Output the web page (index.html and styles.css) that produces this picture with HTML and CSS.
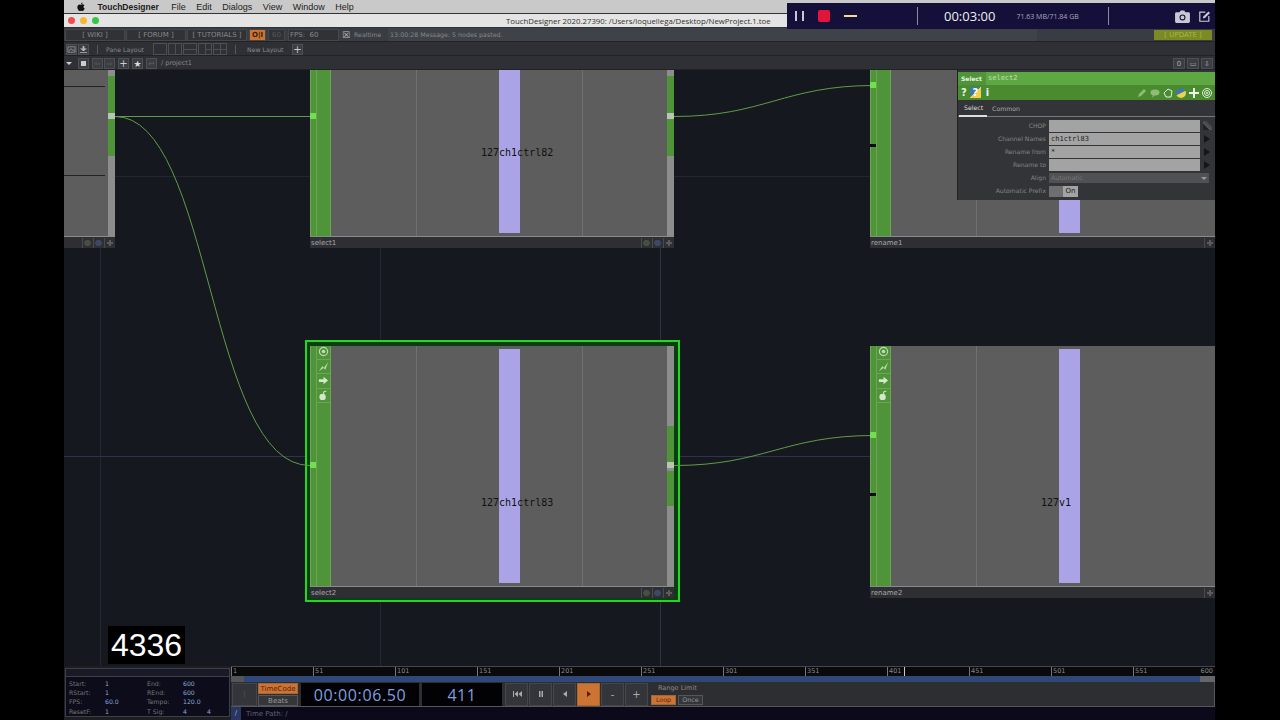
FILE: index.html
```html
<!DOCTYPE html>
<html lang="en">

<head>
  <meta charset="UTF-8" />
  <title>TouchDesigner</title>
  <link rel="stylesheet" href="styles.css">
</head>

<body>
  <div class="app">
    <div class="menubar">
      <svg class="apple" viewBox="0 0 12 14"><path d="M8.3 0.4c0 1.3-1 2.5-2.3 2.5C5.9 1.6 7 .5 8.3.4zM6 3.6c.6 0 1.400-.6 2.500-.6 1 0 2 .5 2.600 1.400-2 1.200-1.700 4 .4 4.900-.5 1.400-1.700 3.700-3 3.700-.8 0-1.200-.5-2.200-.5s-1.400.5-2.200.5C2.400 13 .5 9.900.5 7.300.5 4.700 2.200 3.100 3.900 3.100c.9 0 1.600.5 2.100.5z"/></svg>
      <b>TouchDesigner</b>
      <span>File</span><span>Edit</span><span>Dialogs</span><span>View</span><span>Window</span><span>Help</span>
    </div>

    <div class="titlebar">
      <i class="light red"></i><i class="light yellow"></i><i class="light green"></i>
      <span class="title">TouchDesigner 2020.27390: /Users/loquellega/Desktop/NewProject.1.toe</span>
    </div>

    <div class="bar toolbar1">
      <span class="tbtn w60">[ WIKI ]</span>
      <span class="tbtn w60">[ FORUM ]</span>
      <span class="tbtn w60">[ TUTORIALS ]</span>
      <span class="tbtn oi">O|I</span>
      <span class="tbtn sixty">60</span>
      <span class="tbtn fps">FPS:&nbsp; 60</span>
      <span class="check">&#9746;</span>
      <span class="realtime">Realtime</span>
      <span class="message">13:00:28 Message: 5 nodes pasted.</span>
      <span class="update">[ UPDATE ]</span>
    </div>

    <div class="bar toolbar2">
      <span class="sq"><svg viewBox="0 0 10 10"><path d="M1 2h8v6H1zM2 7l2.500-3L6 6l1-1 1.500 2" fill="none" stroke="#a0a3a8" stroke-width=".8"/></svg></span>
      <span class="sq"><svg viewBox="0 0 10 10"><path d="M4 1h2v3h3L5 7 1 4h3zM1 8h8v1H1z" fill="#b5b8bd"/></svg></span>
      <i class="sep"></i>
      <span class="label pane">Pane Layout</span>
      <span class="layouts"><i></i><i class="split-v"></i><i class="split-h"></i><i class="split-3"></i><i class="split-4"></i></span>
      <i class="sep"></i>
      <span class="label newlayout">New Layout</span>
      <span class="sq plus">+</span>
    </div>

    <div class="bar toolbar3">
      <span class="arrow-down"></span>
      <span class="sq stop"><i></i></span>
      <span class="sq dim nudge">&#8678;</span>
      <span class="sq dim">&#8680;</span>
      <span class="sq plus nudge">+</span>
      <span class="sq star nudge">&#9733;</span>
      <span class="sq dim nudge">&#8617;</span>
      <span class="path">/ project1</span>
      <span class="corner">
        <span class="sq">0</span><span class="sq">&#9645;</span><span class="sq">&#8681;</span>
      </span>
    </div>

    <div class="network">
      <i class="guide gv g1"></i><i class="guide gv g2"></i><i class="guide gv g3"></i>
      <i class="guide gh"></i><i class="guide gh2"></i>

      <div class="node left-node">
        <div class="node-body">
          <i class="tick t1"></i><i class="tick t2"></i>
        </div>
        <div class="out-strip"><i class="st1"></i><i class="st2"></i></div>
        <div class="footer"><span class="name"></span><i class="dot"></i><i class="dot blue"></i><i class="dot cross"></i></div>
      </div>

      <div class="node n-select1">
        <div class="in-strip"></div>
        <div class="node-body">
          <i class="vline l1"></i><i class="vline l2"></i><i class="lane"></i>
          <span class="chan">127ch1ctrl82</span>
        </div>
        <div class="out-strip"><i class="st3"></i></div>
        <div class="footer"><span class="name">select1</span><i class="dot"></i><i class="dot blue"></i><i class="dot cross"></i></div>
      </div>

      <div class="node n-rename1">
        <div class="in-strip"></div>
        <div class="node-body">
          <i class="vline l1"></i><i class="lane"></i>
        </div>
        <div class="footer"><span class="name">rename1</span><i class="dot cross"></i></div>
        <i class="black-pin"></i>
      </div>

      <div class="selected"></div>
      <div class="node n-select2">
        <div class="in-strip">
          <div class="flags">
            <span><svg viewBox="0 0 12 12"><circle cx="6" cy="6" r="4.500" fill="none" stroke="#c3dab6" stroke-width="1.200"/><circle cx="6" cy="6" r="2" fill="#c3dab6"/></svg></span>
            <span><svg viewBox="0 0 12 12"><path d="M1 11 5 5.500 6.500 7.500 11 1 8 9.500 6.200 7.500z" fill="#c3dab6"/></svg></span>
            <span><svg viewBox="0 0 12 12"><path d="M1 4.500h5V2l5 4-5 4V7.500H1z" fill="#d6e6cc"/></svg></span>
            <span><svg viewBox="0 0 12 12"><circle cx="5" cy="7.500" r="3.500" fill="#d6e6cc"/><path d="M6 4c0-2 1-3 3-2.500" fill="none" stroke="#d6e6cc" stroke-width="1.200"/></svg></span>
          </div>
        </div>
        <div class="node-body">
          <i class="vline l1"></i><i class="vline l2"></i><i class="lane"></i>
          <span class="chan">127ch1ctrl83</span>
        </div>
        <div class="out-strip"><i class="st4"></i><i class="st5"></i></div>
        <div class="footer"><span class="name">select2</span><i class="dot"></i><i class="dot blue"></i><i class="dot cross"></i></div>
      </div>

      <div class="node n-rename2">
        <div class="in-strip">
          <div class="flags">
            <span><svg viewBox="0 0 12 12"><circle cx="6" cy="6" r="4.500" fill="none" stroke="#c3dab6" stroke-width="1.200"/><circle cx="6" cy="6" r="2" fill="#c3dab6"/></svg></span>
            <span><svg viewBox="0 0 12 12"><path d="M1 11 5 5.500 6.500 7.500 11 1 8 9.500 6.200 7.500z" fill="#c3dab6"/></svg></span>
            <span><svg viewBox="0 0 12 12"><path d="M1 4.500h5V2l5 4-5 4V7.500H1z" fill="#d6e6cc"/></svg></span>
            <span><svg viewBox="0 0 12 12"><circle cx="5" cy="7.500" r="3.500" fill="#d6e6cc"/><path d="M6 4c0-2 1-3 3-2.500" fill="none" stroke="#d6e6cc" stroke-width="1.200"/></svg></span>
          </div>
        </div>
        <div class="node-body">
          <i class="vline l1"></i><i class="lane"></i>
          <span class="chan">127v1</span>
        </div>
        <div class="footer"><span class="name">rename2</span><i class="dot cross"></i></div>
        <i class="black-pin"></i>
      </div>

      <svg class="wires" viewBox="0 0 1151 596">
        <g fill="none" stroke="#5f9c47" stroke-width="1">
          <path d="M51 46.500H250"/>
          <path d="M51 46.500C148 46.500 144 395.500 246 395.500"/>
          <path d="M610 46.500C700 46.500 720 15.500 810 15.500"/>
          <path d="M610 395.500C700 395.500 720 365.500 810 365.500"/>
        </g>
        <g fill="#b9c4b4">
          <rect x="44" y="43" width="7" height="6"/>
          <rect x="603" y="43" width="7" height="6"/>
          <rect x="603" y="392" width="7" height="6"/>
        </g>
        <g fill="#6fe04f">
          <rect x="246" y="43" width="6" height="6"/>
          <rect x="246" y="392" width="6" height="6"/>
          <rect x="806" y="12" width="6" height="6"/>
          <rect x="806" y="362" width="6" height="6"/>
        </g>
      </svg>

      <div class="counter">4336</div>

      <div class="params">
        <div class="p-head">
          <b>Select</b><span class="p-name">select2</span>
        </div>
        <div class="p-icons">
          <span class="q">?</span>
          <span class="qpy">?</span>
          <span class="info">i</span>
          <span class="p-right">
            <svg viewBox="0 0 10 10"><path d="M1 9 2 6 7 1 9 3 4 8z" fill="#8fbd77"/></svg>
            <svg viewBox="0 0 10 10"><ellipse cx="5" cy="4.500" rx="4.500" ry="3" fill="#8fbd77"/><path d="M3 7 2 9.500 5 7.500z" fill="#8fbd77"/></svg>
            <svg viewBox="0 0 10 10"><path d="M1 5 5 1 9 3 8 9H3z" fill="none" stroke="#e6efe0"/></svg>
            <svg viewBox="0 0 10 10"><path d="M5 0a5 5 0 0 0-5 5c0 .8.200 1.500.5 2.200L9.500 2.800A5 5 0 0 0 5 0z" fill="#3f78ab"/><path d="M5 10a5 5 0 0 0 5-5c0-.8-.2-1.500-.5-2.200L.5 7.200A5 5 0 0 0 5 10z" fill="#f2d04f"/></svg>
            <svg viewBox="0 0 10 10"><path d="M4 0h2v4h4v2H6v4H4V6H0V4h4z" fill="#eef5ea"/></svg>
            <svg viewBox="0 0 10 10"><g fill="none" stroke="#dfeeda"><circle cx="5" cy="5" r="4.500"/><circle cx="5" cy="5" r="2.500"/></g><circle cx="5" cy="5" r="1" fill="#dfeeda"/></svg>
          </span>
        </div>
        <div class="p-tabs"><span class="on">Select</span><span>Common</span></div>
        <div class="p-rows">
          <div class="p-row"><label>CHOP</label><span class="field"></span><span class="drop"></span></div>
          <div class="p-row"><label>Channel Names</label><span class="field">ch1ctrl83</span><span class="tri"></span></div>
          <div class="p-row"><label>Rename from</label><span class="field">*</span><span class="tri"></span></div>
          <div class="p-row"><label>Rename to</label><span class="field"></span><span class="tri"></span></div>
          <div class="p-row"><label>Align</label><span class="menu">Automatic</span></div>
          <div class="p-row"><label>Automatic Prefix</label><span class="toggle"><i></i><b>On</b></span></div>
        </div>
      </div>
    </div>

    <div class="timeline">
      <div class="range-panel">
        <div class="range-head"></div>
        <div class="range-grid">
          <span>Start:</span><em>1</em><span>End:</span><em>600</em><em></em>
          <span>RStart:</span><em>1</em><span>REnd:</span><em>600</em><em></em>
          <span>FPS:</span><em>60.0</em><span>Tempo:</span><em>120.0</em><em></em>
          <span>ResetF:</span><em>1</em><span>T Sig:</span><em>4</em><em>4</em>
        </div>
      </div>
      <div class="time-main">
        <div class="ruler">
          <span>1</span><span>51</span><span>101</span><span>151</span><span>201</span><span>251</span><span>301</span><span>351</span><span>401</span><span>451</span><span>501</span><span>551<b>600</b></span>
          <i class="playhead"></i>
        </div>
        <div class="range-bar"></div>
        <div class="transport">
          <span class="tp-btn first">|</span>
          <div class="modes"><span class="mode on">TimeCode</span><span class="mode">Beats</span></div>
          <span class="readout code">00:00:06.50</span>
          <span class="readout frame">411</span>
          <span class="tp-btn"><svg viewBox="0 0 10 6"><path d="M1 0h1v6H1zM6 0v6L2.500 3zM10 0v6L6.500 3z" fill="#aaa"/></svg></span>
          <span class="tp-btn"><svg viewBox="0 0 10 6"><path d="M3 0h1.500v6H3zM5.500 0H7v6H5.500z" fill="#aaa"/></svg></span>
          <span class="tp-btn"><svg viewBox="0 0 10 6"><path d="M7 0v6L3 3z" fill="#aaa"/></svg></span>
          <span class="tp-btn active"><svg viewBox="0 0 10 6"><path d="M3 0v6l4-3z" fill="#5c1a08"/></svg></span>
          <span class="tp-btn big">-</span>
          <span class="tp-btn big">+</span>
          <div class="limit">
            <span class="limit-title">Range Limit</span>
            <div class="limit-btns"><span class="mode on">Loop</span><span class="mode">Once</span></div>
          </div>
        </div>
        <div class="timepath"><span class="slash">/</span><span>Time Path: /</span></div>
      </div>
    </div>
  </div>

  <div class="recorder">
    <div class="rec-controls">
      <i class="pause"></i><i class="pause p2"></i>
      <i class="rec-dot"></i>
      <i class="minus"></i>
    </div>
    <div class="rec-info">
      <span class="rec-time">00:03:00</span>
      <span class="rec-size">71.63 MB/71.84 GB</span>
    </div>
    <div class="rec-tools">
      <svg class="cam" viewBox="0 0 16 14"><path d="M1.500 2.500H5L6 .5h4l1 2h3.500A1.500 1.500 0 0 1 16 4v8.500a1.500 1.500 0 0 1-1.500 1.500h-13A1.500 1.500 0 0 1 0 12.500V4a1.500 1.500 0 0 1 1.500-1.500z" fill="#c9c9d6"/><circle cx="8" cy="8" r="3.200" fill="#14103a"/><circle cx="8" cy="8" r="2" fill="#c9c9d6"/></svg>
      <svg class="edit" viewBox="0 0 14 14"><path d="M8 1.500H1V13h11.500V6.500" fill="none" stroke="#c9c9d6" stroke-width="1.500"/><path d="M5 9.500 5.500 7 12 .5 14 2.500 7.500 9z" fill="#c9c9d6"/></svg>
    </div>
  </div>
</body>

</html>
```

FILE: styles.css
```css
:root {
  --bar: #2e3035;
  --line: #4a4d52;
  --text-dim: #85888e;
  --green: #4f9438;
  --node: #5d5d5d;
  --lane: #aaa4e6;
  --orange: #cc7434;
  --blue-text: #7f9fe0;
}

* {
  box-sizing: border-box;
}

html,
body {
  margin: 0;
  height: 100%;
  background: #000;
  overflow: hidden;
}

body {
  font-family: "DejaVu Sans", sans-serif;
  font-size: 7px;
  color: var(--text-dim);
}

i {
  display: block;
}

.app {
  width: 1151px;
  height: 720px;
  margin-left: 64px;
  display: flex;
  flex-direction: column;
  background: #202226;
}

/* mac chrome */
.menubar {
  height: 13px;
  background: #c9c9c9;
  display: flex;
  align-items: center;
  gap: 10.500px;
  padding-left: 13px;
  color: #1c1c1c;
  font-family: "Liberation Sans", sans-serif;
  font-size: 9px;
}

.menubar b {
  margin: 0 2px 0 2px;
  font-size: 8.500px;
}

.apple {
  width: 8px;
  height: 10px;
  fill: #111;
}

.titlebar {
  height: 15px;
  background: #e4e4e4;
  border-top: 1px solid #333;
  border-bottom: 1px solid #333;
  display: flex;
  align-items: center;
  gap: 5px;
  padding-left: 4px;
  position: relative;
}

.light {
  width: 7px;
  height: 7px;
  border-radius: 50%;
}

.red { background: #f0504a; }
.yellow { background: #f5b731; }
.green { background: #35c748; }

.title {
  position: absolute;
  left: 442px;
  font-family: "Open Sans", sans-serif;
  font-size: 7.800px;
  color: #333;
  white-space: nowrap;
}

/* toolbars */
.bar {
  display: flex;
  align-items: center;
  background: var(--bar);
  border-bottom: 1px solid #222;
  white-space: nowrap;
}

.toolbar1 {
  height: 14px;
  padding-left: 1px;
  gap: 1px;
  background: #393c42;
}

.tbtn {
  height: 12px;
  text-align: center;
  background: #303236;
  border: 1px solid #44474c;
  line-height: 10px;
}

.w60 { width: 60px; }
.oi { width: 17px; margin-left: 1px; background: var(--orange); color: #3b1d08; font-weight: bold; }
.sixty { width: 17px; margin-left: 1px; color: #555; }
.fps { width: 51px; margin-left: 2px; text-align: left; padding-left: 1px; }

.check {
  margin-left: 2px;
  font-size: 9px;
  color: #bbb;
}

.realtime {
  margin-left: 3px;
  width: 33px;
  font-size: 6.200px;
}

.message {
  background: #3f4248;
  height: 13px;
  line-height: 13px;
  width: 649px;
  padding-left: 2px;
  font-size: 6.300px;
}

.update {
  width: 58px;
  height: 10px;
  line-height: 10px;
  margin-left: 116px;
  text-align: center;
  background: #7b8a24;
  color: #a9b44b;
}

.toolbar2 {
  height: 14px;
  padding: 1px 0 0 2px;
  gap: 1px;
}

.sq {
  width: 11px;
  height: 11px;
  line-height: 10px;
  text-align: center;
  border: 1px solid #4c4f54;
  background: #3a3d42;
  color: #aaa;
  flex: none;
}

.sq svg {
  display: block;
  width: 9px;
  height: 9px;
}

.sep {
  width: 1px;
  height: 9px;
  background: #55585e;
}

.toolbar2 .sep { margin-left: 7px; }

.label {
  color: #85888e;
  font-size: 6.200px;
}

.pane { margin-left: 7px; width: 46px; }

.layouts {
  display: flex;
  gap: 1px;
}

.layouts i {
  width: 14px;
  height: 12px;
  border: 1px solid #4c4f54;
}

.split-v { background: linear-gradient(#4c4f54, #4c4f54) center / 1px 100% no-repeat; }
.split-h { background: linear-gradient(#4c4f54, #4c4f54) center / 100% 1px no-repeat; }
.split-3 {
  background:
    linear-gradient(#4c4f54, #4c4f54) center / 1px 100% no-repeat,
    linear-gradient(#4c4f54, #4c4f54) right center / 50% 1px no-repeat;
}
.split-4 {
  background:
    linear-gradient(#4c4f54, #4c4f54) center / 1px 100% no-repeat,
    linear-gradient(#4c4f54, #4c4f54) center / 100% 1px no-repeat;
}

.newlayout { margin-left: 10px; width: 44px; }

.plus {
  font-size: 10px;
  color: #ccc;
}

.toolbar3 {
  height: 14px;
  gap: 1px;
  padding: 1px 0 0 2px;
}

.arrow-down {
  width: 0;
  height: 0;
  border: 3px solid transparent;
  border-top: 3px solid #ccc;
  margin: 3px 5px 0 0;
}

.stop i {
  width: 5px;
  height: 5px;
  margin: 2px auto;
  background: #ccc;
}

.toolbar3 .nudge { margin-left: 2px; }
.dim { color: #666; }
.star { color: #ddd; font-size: 9px; }

.path {
  margin-left: 3px;
  flex: 1;
  font-size: 6.500px;
}

.corner {
  display: flex;
  gap: 1px;
  padding-right: 2px;
}

.corner .sq {
  width: 12px;
  margin-left: 1px;
}

/* network editor */
.network {
  position: relative;
  flex: 1;
  background: #16181f;
  overflow: hidden;
}

.guide {
  position: absolute;
  background: #232731;
}

.gv { top: 0; bottom: 0; width: 1px; }
.g1 { left: 36px; }
.g2 { left: 316px; }
.g3 { left: 596px; background: #2d3140; }
.gh { left: 0; right: 0; top: 386px; height: 1px; background: #30324a; }
.gh2 { left: 0; right: 0; top: 106px; height: 1px; background: #24262e; }

.node {
  position: absolute;
  display: grid;
  grid-template-columns: 21px 1fr 7px;
  grid-template-rows: 1fr 12px;
  background: var(--node);
}

.left-node {
  left: 0;
  top: 0;
  width: 51px;
  height: 178px;
  grid-template-columns: 1fr 7px;
}

.n-select1 { left: 246px; top: 0; width: 364px; height: 178px; }
.n-rename1 { left: 806px; top: 0; width: 345px; height: 178px; grid-template-columns: 21px 1fr; }
.n-select2 { left: 246px; top: 276px; width: 364px; height: 252px; }
.n-rename2 { left: 806px; top: 276px; width: 345px; height: 252px; grid-template-columns: 21px 1fr; }

.selected {
  position: absolute;
  left: 241px;
  top: 270px;
  width: 375px;
  height: 262px;
  border: 2px solid #22d822;
  background: #0b3d12;
}

.in-strip {
  border-left: 1px solid #6fa858;
  border-right: 1px solid #6aa850;
  position: relative;
  background: linear-gradient(90deg, transparent 5px, #6da556 5px, #6da556 6px, transparent 6px), var(--green);
}

.flags {
  position: absolute;
  left: 5px;
  right: 0;
  top: -1px;
}

.flags span {
  display: flex;
  align-items: center;
  justify-content: center;
  height: 14.500px;
  border-bottom: 1px solid #6da556;
}

.flags svg {
  width: 11px;
  height: 11px;
}

.node-body {
  position: relative;
  overflow: hidden;
}

.vline {
  position: absolute;
  top: 0;
  bottom: 0;
  width: 1px;
  background: #707070;
}

.l1 { left: 85px; }
.l2 { left: 251px; }

.lane {
  position: absolute;
  left: 168px;
  width: 21px;
  top: 3px;
  bottom: 3px;
  background: var(--lane);
}

.n-select1 .lane,
.n-rename1 .lane { top: 0; }

.chan {
  position: absolute;
  left: 150px;
  top: 151px;
  font-family: "DejaVu Sans Mono", monospace;
  font-size: 10px;
  color: #111;
  white-space: nowrap;
}

.n-select1 .chan { top: 77px; }

.tick {
  position: absolute;
  left: 0;
  right: 3px;
  height: 1px;
  background: #222;
}

.t1 { top: 16px; }
.t2 { top: 105px; }

.out-strip {
  background: #8d8d8d;
  position: relative;
}

.out-strip i {
  position: absolute;
  left: 0;
  right: 0;
  background: var(--green);
}

.st1 { top: 6px; height: 37px; }
.st2 { top: 49px; height: 37px; }
.st3 { top: 6px; height: 80px; }
.st4 { top: 80px; height: 36px; }
.st5 { top: 125px; height: 35px; }

.footer {
  grid-column: 1 / -1;
  display: flex;
  align-items: center;
  gap: 1px;
  padding-right: 1px;
  background: #2d2f33;
  border-top: 1px solid #8a8a8a;
  color: #a9a9a9;
  font-size: 7px;
}

.name {
  flex: 1;
  padding-left: 1px;
}

.dot {
  width: 10px;
  height: 10px;
  border-left: 1px solid #484a4e;
  background: radial-gradient(circle, #47503f 0 3px, transparent 3.500px);
}

.dot.blue { background: radial-gradient(circle, #3c4866 0 3px, transparent 3.500px); }
.dot.cross {
  background:
    linear-gradient(#5c5c5c, #5c5c5c) center / 6px 2px no-repeat,
    linear-gradient(#5c5c5c, #5c5c5c) center / 2px 6px no-repeat;
}

.black-pin {
  position: absolute;
  left: 0;
  top: 74px;
  width: 6px;
  height: 3px;
  background: #0a0a0a;
}

.n-rename2 .black-pin { top: 147px; }

.wires {
  position: absolute;
  left: 0;
  top: 0;
  width: 1151px;
  height: 596px;
  pointer-events: none;
}

.counter {
  position: absolute;
  left: 44px;
  top: 556px;
  width: 77px;
  height: 38px;
  background: #000;
  color: #fff;
  font-family: "Liberation Sans", sans-serif;
  font-size: 32px;
  line-height: 38px;
  text-align: center;
}

/* parameter dialog */
.params {
  position: absolute;
  left: 893px;
  top: 0;
  width: 258px;
  height: 130px;
  padding-top: 2px;
  background: #333437;
  border-left: 1px solid #222;
}

.p-head {
  height: 13px;
  display: flex;
  align-items: center;
  background: var(--green);
  color: #e6f0e0;
}

.p-head b {
  width: 28px;
  padding-left: 3px;
  font-size: 6px;
}

.p-name {
  flex: 1;
  height: 13px;
  line-height: 13px;
  padding-left: 2px;
  background: #5ea843;
  color: #c7dcb9;
  font-family: "DejaVu Sans Mono", monospace;
  font-size: 7px;
}

.p-icons {
  height: 15px;
  display: flex;
  align-items: center;
  gap: 3px;
  padding-left: 3px;
  background: #4a8b30;
  font-weight: bold;
  font-size: 10px;
  color: #e8f2e0;
}

.qpy {
  width: 11px;
  height: 11px;
  line-height: 11px;
  text-align: center;
  background: linear-gradient(135deg, #3f78ab 50%, #f2d04f 50%);
  color: #fff;
}

.info { margin-left: 2px; color: #e0f0ff; }

.p-right {
  margin-left: auto;
  display: flex;
  gap: 3px;
  padding-right: 3px;
}

.p-right svg {
  width: 10px;
  height: 10px;
}

.p-tabs {
  height: 17px;
  display: flex;
  align-items: flex-end;
  padding-left: 1px;
  border-bottom: 1px solid #777;
  color: #a9a9a9;
  font-size: 6.200px;
}

.p-tabs span {
  padding: 0 4px 4px 5px;
}

.p-tabs .on {
  color: #ddd;
  border-bottom: 2px solid #ddd;
  margin-bottom: -1px;
}

.p-rows {
  padding-top: 2px;
}

.p-row {
  height: 13px;
  display: flex;
  align-items: center;
  gap: 3px;
}

.p-row label {
  width: 88px;
  text-align: right;
  color: #858585;
  font-size: 6.100px;
}

.field {
  width: 151px;
  height: 12px;
  line-height: 12px;
  padding-left: 2px;
  background: #a3a3a3;
  color: #222;
  font-family: "DejaVu Sans Mono", monospace;
  font-size: 7px;
}

.tri {
  width: 0;
  height: 0;
  margin-left: 1px;
  border: 4px solid transparent;
  border-left: 6px solid #151515;
  border-right: 0;
}

.drop {
  width: 9px;
  height: 9px;
  background: linear-gradient(45deg, #222 35%, #555 35%, #444 70%, transparent 70%);
}

.menu {
  width: 160px;
  height: 10px;
  line-height: 10px;
  padding-left: 2px;
  background: #505154;
  color: #777;
  font-size: 6.200px;
  position: relative;
}

.menu::after {
  content: "";
  position: absolute;
  right: 2px;
  top: 4px;
  border: 3px solid transparent;
  border-top: 3px solid #999;
}

.toggle {
  display: flex;
  width: 29px;
  height: 11px;
  margin-top: 2px;
}

.toggle i {
  width: 14px;
  background: #6f6f6f;
}

.toggle b {
  flex: 1;
  background: #a3a3a3;
  color: #222;
  font-weight: normal;
  text-align: center;
  line-height: 11px;
}

/* timeline */
.timeline {
  height: 54px;
  display: flex;
  background: #1d1e22;
}

.range-panel {
  flex: none;
  width: 165px;
  margin: 2px 0 3px 1px;
  border: 1px solid #3c3e48;
  background: #0c0c1a;
}

.range-head {
  height: 8px;
  border-bottom: 1px solid #3c3e48;
  background: #1a1a26;
}

.range-grid {
  display: grid;
  grid-template-columns: 36px 42px 36px 24px 1fr;
  grid-auto-rows: 9.200px;
  padding: 2px 0 0 3px;
  font-size: 6.200px;
  line-height: 9px;
}

.range-grid span { color: #777; }
.range-grid em { font-style: normal; color: #8ea4d8; }

.time-main {
  flex: none;
  width: 984px;
  margin-left: 1px;
  display: flex;
  flex-direction: column;
}

.ruler {
  position: relative;
  height: 10px;
  display: flex;
  background: #0a0a0c;
  border-top: 1px solid #44464c;
}

.ruler span {
  flex: none;
  width: 82px;
  line-height: 9px;
  padding-left: 1px;
  border-left: 1px solid #777;
  font-size: 6.500px;
  color: #888;
  display: flex;
  justify-content: space-between;
}

.ruler b {
  font-weight: normal;
  padding-right: 2px;
}

.playhead {
  position: absolute;
  left: 673px;
  top: 0;
  bottom: 0;
  width: 1px;
  background: #c5c9dc;
}

.range-bar {
  height: 6px;
  background: #2f4878;
  border-left: 13px solid #55565a;
  border-right: 15px solid #65666a;
}

.transport {
  height: 25px;
  display: flex;
  align-items: center;
  gap: 1px;
  padding-left: 1px;
  background: #2d2e31;
  border-bottom: 1px solid #55565a;
  border-right: 1px solid #55565a;
}

.tp-btn {
  flex: none;
  width: 23px;
  height: 23px;
  line-height: 21px;
  text-align: center;
  border: 1px solid #44464c;
  background: #33353a;
  color: #aaa;
  display: flex;
  align-items: center;
  justify-content: center;
}

.tp-btn svg {
  width: 10px;
  height: 6px;
}

.tp-btn.first {
  width: 25px;
  color: #555;
}

.tp-btn.big {
  font-size: 10px;
}

.tp-btn.active {
  background: var(--orange);
  border-color: #a9672f;
}

.modes {
  flex: none;
  width: 40px;
  display: flex;
  flex-direction: column;
  gap: 1px;
}

.mode {
  height: 11px;
  line-height: 10px;
  text-align: center;
  background: #34363a;
  border: 1px solid #55565a;
  color: #999;
}

.mode.on {
  background: var(--orange);
  color: #5c2208;
  border-color: #a0683a;
}

.readout {
  flex: none;
  height: 23px;
  line-height: 24px;
  text-align: center;
  background: #020204;
  color: var(--blue-text);
  font-family: "Open Sans", sans-serif;
  font-size: 16px;
  letter-spacing: 0.6px;
}

.code {
  width: 118px;
  margin: 0 2px 0 2px;
}

.frame {
  width: 80px;
  margin-right: 2px;
}

.limit {
  margin-left: 2px;
  display: flex;
  flex-direction: column;
  gap: 3px;
}

.limit-title {
  padding-left: 7px;
  color: #8a8a8a;
  font-size: 6.500px;
}

.limit-btns {
  display: flex;
  gap: 2px;
}

.limit-btns .mode {
  width: 25px;
  height: 10px;
  line-height: 8px;
  font-size: 6.300px;
}

.timepath {
  flex: 1;
  display: flex;
  align-items: center;
  background: #0c0a1a;
  color: #5d6170;
}

.slash {
  width: 10px;
  height: 100%;
  margin-right: 5px;
  text-align: center;
  background: #2a3560;
  color: #8ea4d8;
  line-height: 13px;
}

/* screen recorder overlay */
.recorder {
  position: absolute;
  left: 787px;
  top: 3px;
  width: 428px;
  height: 26px;
  background: #14103a;
  display: flex;
  align-items: center;
  color: #c9c9d6;
}

.rec-controls {
  width: 131px;
  height: 18px;
  display: flex;
  align-items: center;
  border-right: 1px solid #8a8aa0;
  padding-left: 8px;
}

.pause {
  width: 2px;
  height: 10px;
  margin-right: 5px;
  background: #c9c9d6;
}

.rec-dot {
  width: 12px;
  height: 12px;
  border-radius: 2px;
  background: #e3143c;
  margin-left: 9px;
}

.minus {
  width: 13px;
  height: 2px;
  margin-left: 14px;
  background: #f3d98a;
}

.rec-info {
  width: 191px;
  height: 18px;
  display: flex;
  align-items: center;
  gap: 21px;
  padding-left: 26px;
  border-right: 1px solid #8a8aa0;
}

.rec-time {
  font-family: "Open Sans", sans-serif;
  font-size: 13px;
  color: #eee;
}

.rec-size {
  font-family: "Open Sans", sans-serif;
  font-size: 7px;
  color: #a9a9b8;
}

.rec-tools {
  flex: 1;
  display: flex;
  align-items: center;
  justify-content: flex-end;
  gap: 9px;
  padding-right: 5px;
}

.cam {
  width: 15px;
  height: 13px;
}

.edit {
  width: 11px;
  height: 11px;
}
```
